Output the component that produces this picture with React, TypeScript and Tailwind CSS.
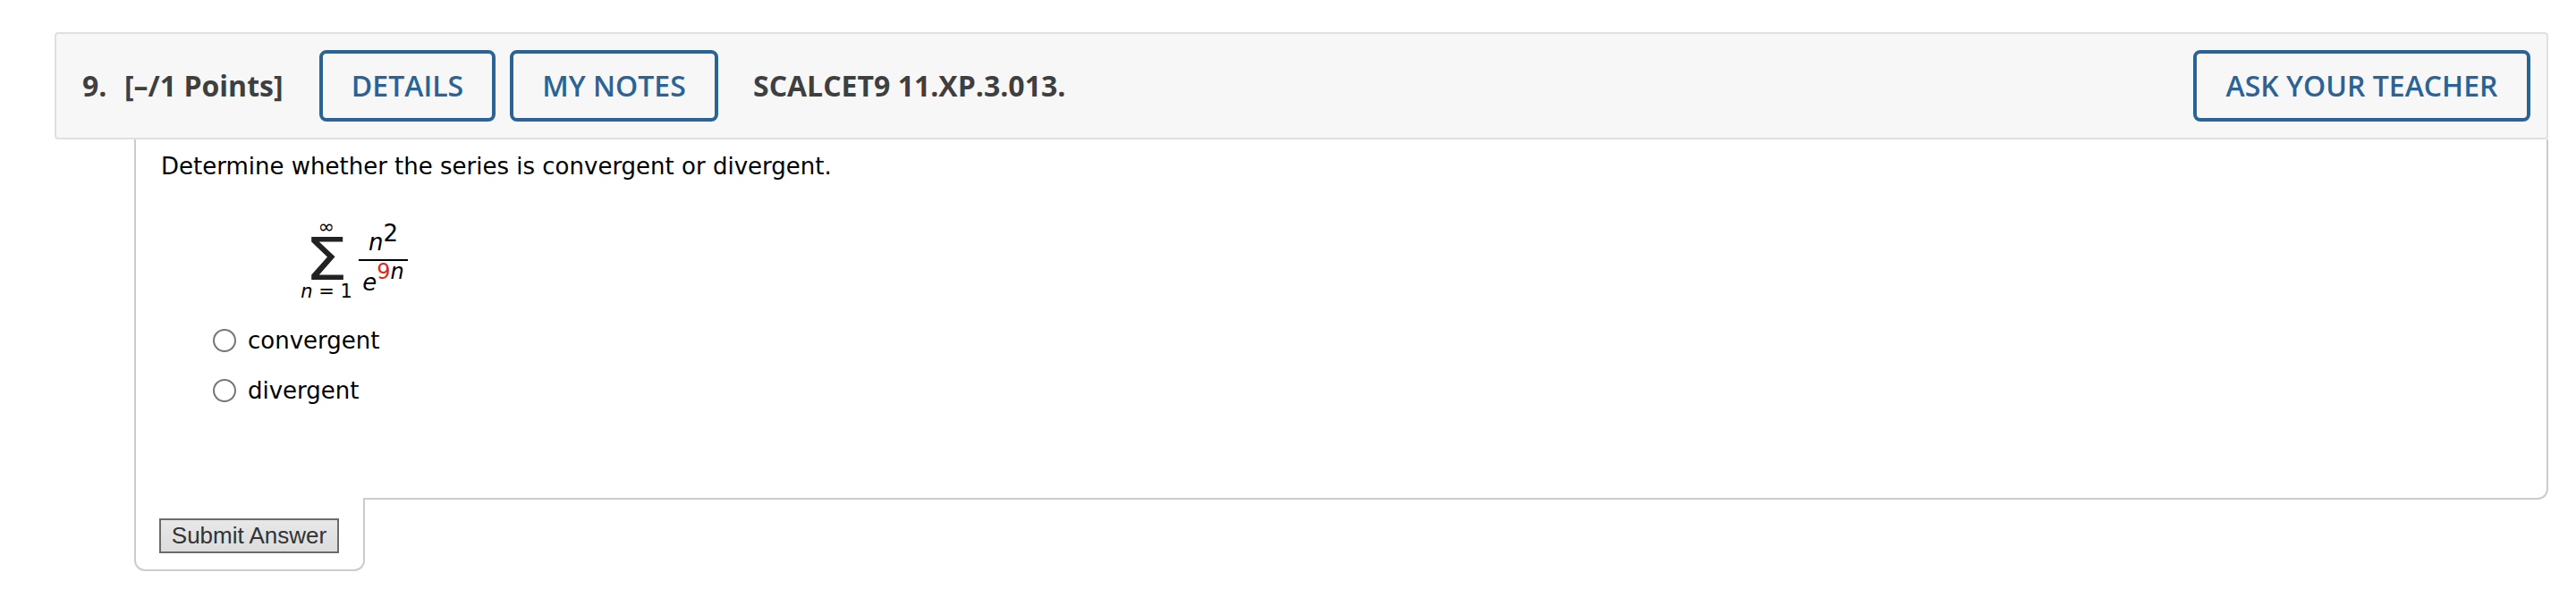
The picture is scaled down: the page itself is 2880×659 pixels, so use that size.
const headerBtn =
  "h-[80px] rounded-[8px] border-[4px] border-[#2c6395] text-[#2c6395] font-semibold text-[32px] flex items-center justify-center";

function Series() {
  return (
    <div className="flex items-start ml-[156px] mt-[50px] text-black h-[92px]">
      <div className="w-[58px] flex flex-col items-center">
        <span className="text-[22px] leading-[14px] -mt-[7px]">∞</span>
        <span className="text-[66px] leading-[50px] mt-[5px] font-normal text-[#222222] scale-x-[1.15]">Σ</span>
        <span className="text-[21px] leading-[24px] -mt-[2px] whitespace-nowrap"><i>n</i> = 1</span>
      </div>
      <div className="ml-[7px] w-[55px] flex flex-col items-center -mt-[7px]">
        <div className="h-[43px] text-[26px] leading-[48px] whitespace-nowrap">
          <i>n</i><span className="text-[26px] leading-none align-[10px]">2</span>
        </div>
        <div className="w-full h-[2px] bg-black shrink-0" />
        <div className="text-[26px] leading-[48px] whitespace-nowrap">
          <i>e</i><span className="text-[24px] leading-none align-[13px] text-[#d42a1f]">9</span><span className="text-[24px] leading-none align-[13px]"><i>n</i></span>
        </div>
      </div>
    </div>
  );
}

function Choice({ label }: { label: string }) {
  return (
    <label className="flex items-center h-[26px] mb-[30px] ml-[58px]">
      <span className="w-[26px] h-[26px] rounded-full border-[2px] border-[#767676] bg-white shrink-0" />
      <span className="ml-[13px] text-[26px] leading-[26px] text-black">{label}</span>
    </label>
  );
}

export default function App() {
  return (
    <div className="min-h-[659px] bg-white pt-[36px] pl-[61px] pr-[31px] font-['DejaVu_Sans',sans-serif]">
      <div className="h-[120px] bg-[#f7f7f7] border-2 border-[#e0e0e0] rounded-[4px] flex items-center pl-[29px] pr-[18px] font-['Open_Sans',sans-serif]">
        <span className="text-[32px] font-bold text-[#3f3f3f] w-[47px]">9.</span>
        <span className="text-[32px] font-bold text-[#3f3f3f] w-[218px]">[–/1 Points]</span>
        <button className={headerBtn + " w-[197px]"}>DETAILS</button>
        <button className={headerBtn + " w-[233px] ml-[16px]"}>MY NOTES</button>
        <span className="ml-[39px] text-[32px] font-bold text-[#3f3f3f]">SCALCET9 11.XP.3.013.</span>
        <button className={headerBtn + " w-[377px] ml-auto"}>ASK YOUR TEACHER</button>
      </div>

      <div className="ml-[89px]">
        <div className="h-[403px] border-x-2 border-b-2 border-[#cccccc] rounded-br-[12px] pl-[28px]">
          <p className="text-[26px] leading-[36px] pt-[12px] text-black">Determine whether the series is convergent or divergent.</p>
          <Series />
          <div className="mt-[22px]">
            <Choice label="convergent" />
            <Choice label="divergent" />
          </div>
        </div>
        <div className="w-[258px] h-[82px] -mt-[2px] relative bg-white border-x-2 border-b-2 border-[#cccccc] rounded-b-[12px] pl-[26px] pt-[23px]">
          <button className="w-[201px] h-[39px] pb-[2px] border-[2px] border-[#6b6b6b] bg-gradient-to-b from-[#e8e8e8] to-[#dcdcdc] text-[#333333] text-[26px] leading-none font-['Liberation_Sans',sans-serif] flex items-center justify-center whitespace-nowrap">
            Submit Answer
          </button>
        </div>
      </div>
    </div>
  );
}
